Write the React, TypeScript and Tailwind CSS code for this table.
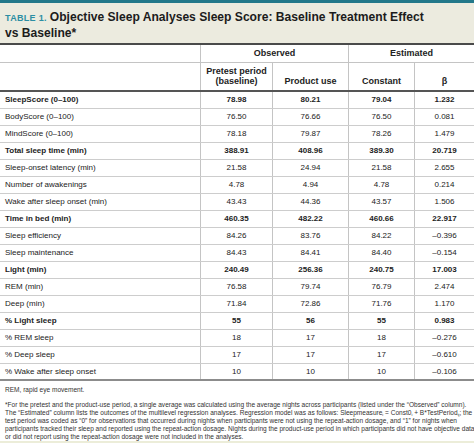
type Row = {
  label: string;
  values: [string, string, string, string];
  bold?: boolean;
};

const rows: Row[] = [
  { label: "SleepScore (0–100)", values: ["78.98", "80.21", "79.04", "1.232"], bold: true },
  { label: "BodyScore (0–100)", values: ["76.50", "76.66", "76.50", "0.081"] },
  { label: "MindScore (0–100)", values: ["78.18", "79.87", "78.26", "1.479"] },
  { label: "Total sleep time (min)", values: ["388.91", "408.96", "389.30", "20.719"], bold: true },
  { label: "Sleep-onset latency (min)", values: ["21.58", "24.94", "21.58", "2.655"] },
  { label: "Number of awakenings", values: ["4.78", "4.94", "4.78", "0.214"] },
  { label: "Wake after sleep onset (min)", values: ["43.43", "44.36", "43.57", "1.506"] },
  { label: "Time in bed (min)", values: ["460.35", "482.22", "460.66", "22.917"], bold: true },
  { label: "Sleep efficiency", values: ["84.26", "83.76", "84.22", "–0.396"] },
  { label: "Sleep maintenance", values: ["84.43", "84.41", "84.40", "–0.154"] },
  { label: "Light (min)", values: ["240.49", "256.36", "240.75", "17.003"], bold: true },
  { label: "REM (min)", values: ["76.58", "79.74", "76.79", "2.474"] },
  { label: "Deep (min)", values: ["71.84", "72.86", "71.76", "1.170"] },
  { label: "% Light sleep", values: ["55", "56", "55", "0.983"], bold: true },
  { label: "% REM sleep", values: ["18", "17", "18", "–0.276"] },
  { label: "% Deep sleep", values: ["17", "17", "17", "–0.610"] },
  { label: "% Wake after sleep onset", values: ["10", "10", "10", "–0.106"] },
];

const cols = "grid grid-cols-[200px_72px_76px_66px_60px]";

export default function App() {
  return (
    <div className="h-[443px] w-[474px] overflow-hidden bg-white font-['Liberation_Sans',Arial,sans-serif] text-[#222]">
      <div className="h-[3px] bg-[#23788a]" />
      <div className="h-[42px] border-b-2 border-[#4a4a4a] bg-[#ecebdf] px-[5px] pt-[7px]">
        <p className="text-[12.1px] font-bold leading-[15px] text-[#1c1c1c]">
          <span className="mr-[3px] text-[9px] tracking-[0.3px] text-[#2c8ea3]">TABLE 1.</span>
          Objective Sleep Analyses Sleep Score: Baseline Treatment Effect
          <br />
          vs Baseline*
        </p>
      </div>

      <div className="grid h-[18px] grid-cols-[200px_148px_126px] border-b border-[#c4c4c4] text-[9px] font-bold">
        <div />
        <div className="flex items-center justify-center border-l border-[#c4c4c4] pt-[1px]">Observed</div>
        <div className="flex items-center justify-center border-l border-[#c4c4c4] pt-[1px]">Estimated</div>
      </div>
      <div className={`${cols} h-[29px] border-b-2 border-[#555] text-[9px] font-bold leading-[10px]`}>
        <div />
        <div className="flex items-end justify-center border-l border-[#c4c4c4] pb-[4px] text-center">
          Pretest period
          <br />
          (baseline)
        </div>
        <div className="flex items-end justify-center border-l border-[#c4c4c4] pb-[4px]">Product use</div>
        <div className="flex items-end justify-center border-l border-[#c4c4c4] pb-[4px]">Constant</div>
        <div className="flex items-end justify-center border-l border-[#c4c4c4] pb-[4px]">β</div>
      </div>

      {rows.map((r, i) => (
        <div
          key={r.label}
          className={`${cols} h-[17px] text-[8px] ${r.bold ? "font-bold" : ""} ${
            i === rows.length - 1 ? "border-b-2 border-[#8c8c8c]" : "border-b border-[#cdcdcd]"
          }`}
        >
          <div className="flex items-center pl-[5px]">{r.label}</div>
          {r.values.map((v, j) => (
            <div key={j} className="flex items-center justify-center border-l border-[#c4c4c4]">
              {v}
            </div>
          ))}
        </div>
      ))}

      <div className="h-[60px] px-[5px] pt-[5px] text-[6.55px] leading-[8px] text-[#333]">
        <p>REM, rapid eye movement.</p>
        <p className="mt-[7px] whitespace-nowrap">
          *For the pretest and the product-use period, a single average was calculated using the average nights across participants (listed under the “Observed” column).
          <br />
          The “Estimated” column lists the outcomes of the multilevel regression analyses. Regression model was as follows: Sleepmeasure
          <sub className="text-[4px]">i</sub> = Const0<sub className="text-[4px]">i</sub> + B*TestPeriod
          <sub className="text-[4px]">ij</sub>; the
          <br />
          test period was coded as “0” for observations that occurred during nights when participants were not using the repeat-action dosage, and “1” for nights when
          <br />
          participants tracked their sleep and reported using the repeat-action dosage. Nights during the product-use period in which participants did not have objective data
          <br />
          or did not report using the repeat-action dosage were not included in the analyses.
        </p>
      </div>
      <div className="h-[4px] bg-[#ecedd9]" />
    </div>
  );
}
